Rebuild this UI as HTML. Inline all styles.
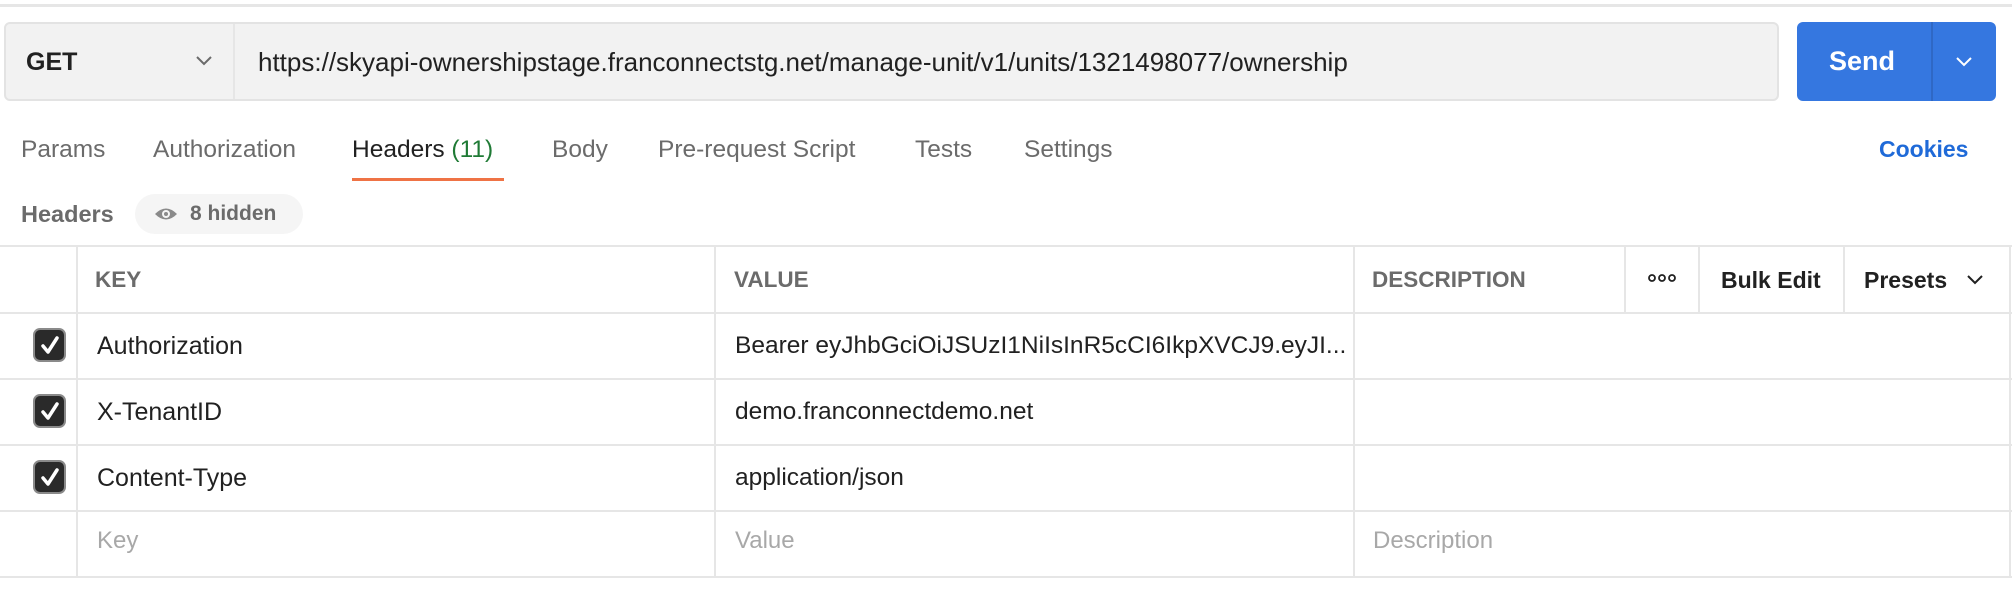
<!DOCTYPE html>
<html><head><meta charset="utf-8"><style>
*{margin:0;padding:0;box-sizing:border-box}
body{width:2012px;height:598px;background:#fff;font-family:"Liberation Sans",sans-serif;position:relative;overflow:hidden;color:#212121}
.a{position:absolute;white-space:nowrap}
.t{font-size:24.5px;color:#6b6b6b;top:136px}
.hl{position:absolute;background:#e6e6e6}
.cell{position:absolute;font-size:24px;line-height:26px}
.cb{position:absolute;left:33px;width:33px;height:34px;background:#2a2a2a;border:2px solid #8a8a8a;border-radius:7px}
</style></head><body>
<div class="hl" style="left:0;top:4px;width:2012px;height:3px"></div>
<div class="a" style="left:4px;top:22px;width:1775px;height:79px;background:#f2f2f2;border:2px solid #e3e3e3;border-radius:6px"></div>
<div class="hl" style="left:233px;top:24px;width:2px;height:75px"></div>
<div class="a" style="left:26px;top:48px;font-size:25px;font-weight:bold;color:#212121">GET</div>
<svg class="a" style="left:195px;top:55px" width="18" height="12"><path d="M2 2 L9 9 L16 2" stroke="#6b6b6b" stroke-width="2" fill="none"/></svg>
<div class="a" style="left:258px;top:47px;font-size:26px;color:#212121">https://skyapi-ownershipstage.franconnectstg.net/manage-unit/v1/units/1321498077/ownership</div>
<div class="a" style="left:1797px;top:22px;width:199px;height:79px;background:#3577e0;border-radius:6px"></div>
<div class="a" style="left:1931px;top:22px;width:2px;height:79px;background:#2f68c5"></div>
<div class="a" style="left:1829px;top:46px;font-size:27px;font-weight:bold;color:#fff">Send</div>
<svg class="a" style="left:1955px;top:56px" width="18" height="12"><path d="M2 2 L9 9 L16 2" stroke="#fff" stroke-width="2" fill="none"/></svg>
<div class="a t" style="left:21px">Params</div>
<div class="a t" style="left:153px">Authorization</div>
<div class="a t" style="left:352px;color:#212121">Headers <span style="color:#1f7a35">(11)</span></div>
<div class="a" style="left:352px;top:178px;width:152px;height:3px;background:#ef7345"></div>
<div class="a t" style="left:552px">Body</div>
<div class="a t" style="left:658px">Pre-request Script</div>
<div class="a t" style="left:915px">Tests</div>
<div class="a t" style="left:1024px">Settings</div>
<div class="a" style="left:1879px;top:136px;font-size:23px;font-weight:bold;color:#1f6ad8">Cookies</div>
<div class="a" style="left:21px;top:201px;font-size:23.5px;font-weight:bold;color:#6b6b6b">Headers</div>
<div class="a" style="left:135px;top:194px;width:168px;height:40px;background:#f5f5f5;border-radius:20px"></div>
<svg class="a" style="left:154px;top:206px" width="24" height="16"><path d="M1 8 Q12 -3 23 8 Q12 19 1 8Z" fill="#8a8a8a"/><circle cx="12" cy="8" r="4" fill="#f5f5f5"/><circle cx="12" cy="8" r="2" fill="#8a8a8a"/></svg>
<div class="a" style="left:190px;top:202px;font-size:21px;font-weight:bold;color:#6b6b6b">8 hidden</div>
<div class="hl" style="left:0;top:245px;width:2012px;height:2px"></div>
<div class="hl" style="left:0;top:312px;width:2012px;height:2px"></div>
<div class="hl" style="left:0;top:378px;width:2012px;height:2px"></div>
<div class="hl" style="left:0;top:444px;width:2012px;height:2px"></div>
<div class="hl" style="left:0;top:510px;width:2012px;height:2px"></div>
<div class="hl" style="left:0;top:576px;width:2012px;height:2px"></div>
<div class="hl" style="left:76px;top:246px;width:2px;height:331px"></div>
<div class="hl" style="left:714px;top:246px;width:2px;height:331px"></div>
<div class="hl" style="left:1353px;top:246px;width:2px;height:331px"></div>
<div class="hl" style="left:1624px;top:246px;width:2px;height:67px"></div>
<div class="hl" style="left:1698px;top:246px;width:2px;height:67px"></div>
<div class="hl" style="left:1843px;top:246px;width:2px;height:67px"></div>
<div class="hl" style="left:2009px;top:246px;width:2px;height:331px"></div>
<div class="cell" style="left:95px;top:267px;font-size:22.5px;font-weight:bold;color:#6b6b6b">KEY</div>
<div class="cell" style="left:734px;top:267px;font-size:22.5px;font-weight:bold;color:#6b6b6b">VALUE</div>
<div class="cell" style="left:1372px;top:267px;font-size:22.5px;font-weight:bold;color:#6b6b6b">DESCRIPTION</div>
<svg class="a" style="left:1648px;top:273px" width="28" height="10"><circle cx="4" cy="5" r="3" stroke="#212121" stroke-width="1.8" fill="none"/><circle cx="14" cy="5" r="3" stroke="#212121" stroke-width="1.8" fill="none"/><circle cx="24" cy="5" r="3" stroke="#212121" stroke-width="1.8" fill="none"/></svg>
<div class="cell" style="left:1721px;top:267px;font-size:23px;font-weight:bold">Bulk Edit</div>
<div class="cell" style="left:1864px;top:267px;font-size:23px;font-weight:bold">Presets</div>
<svg class="a" style="left:1967px;top:275px" width="16" height="10"><path d="M1 1 L8 8 L15 1" stroke="#212121" stroke-width="2" fill="none"/></svg>
<div class="cb" style="top:328px"></div>
<div class="cb" style="top:394px"></div>
<div class="cb" style="top:460px"></div>
<svg class="a" style="left:33px;top:328px" width="34" height="200"><g stroke="#fff" stroke-width="3.5" fill="none" stroke-linecap="round" stroke-linejoin="round"><path d="M10 18 L15 24 L24 10"/><path d="M10 84 L15 90 L24 76"/><path d="M10 150 L15 156 L24 142"/></g></svg>
<div class="cell" style="left:97px;top:333px;font-size:25px">Authorization</div>
<div class="cell" style="left:735px;top:333px;font-size:24.5px">Bearer eyJhbGciOiJSUzI1NiIsInR5cCI6IkpXVCJ9.eyJI...</div>
<div class="cell" style="left:97px;top:399px;font-size:25px">X-TenantID</div>
<div class="cell" style="left:735px;top:399px;font-size:24.5px">demo.franconnectdemo.net</div>
<div class="cell" style="left:97px;top:465px;font-size:25px">Content-Type</div>
<div class="cell" style="left:735px;top:465px;font-size:24.5px">application/json</div>
<div class="cell" style="left:97px;top:528px;color:#a8a8a8">Key</div>
<div class="cell" style="left:735px;top:528px;color:#a8a8a8">Value</div>
<div class="cell" style="left:1373px;top:528px;color:#a8a8a8">Description</div>
</body></html>
